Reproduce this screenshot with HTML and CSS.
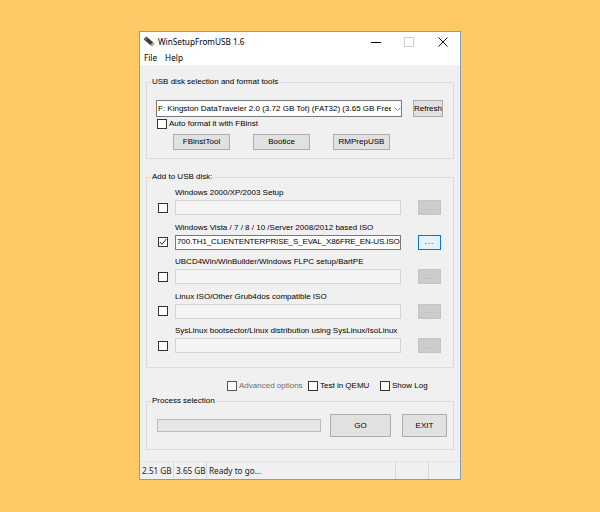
FILE: index.html
```html
<!DOCTYPE html>
<html>
<head>
<meta charset="utf-8">
<title>WinSetupFromUSB 1.6</title>
<link rel="stylesheet" href="styles.css">
</head>
<body>
<div class="window">
  <div class="titlebar">
    <svg class="appicon" viewBox="0 0 12 11" width="12" height="11">
      <path d="M0.6 3.2 L3.4 0.4 L10.2 6.2 L7.4 9.2 Z" fill="#3f3f3f"/>
      <path d="M7.4 9.2 L10.2 6.2 L11.8 7.8 L9 10.8 Z" fill="#a8a8a8"/>
      <path d="M1.4 3.2 L3.4 1.2 L4.8 2.4 L2.8 4.4 Z" fill="#6e6e6e"/>
    </svg>
    <span class="title">WinSetupFromUSB 1.6</span>
    <div class="winbtns">
      <span class="wb"><svg width="10" height="10" viewBox="0 0 10 10"><path d="M0 5.5 H10" stroke="#000" stroke-width="1"/></svg></span>
      <span class="wb"><svg width="10" height="10" viewBox="0 0 10 10"><rect x="0.5" y="0.5" width="9" height="9" fill="none" stroke="#cfcfcf" stroke-width="1"/></svg></span>
      <span class="wb wb-close"><svg width="10" height="10" viewBox="0 0 10 10"><path d="M0.5 0.5 L9.5 9.5 M9.5 0.5 L0.5 9.5" stroke="#111" stroke-width="1"/></svg></span>
    </div>
  </div>
  <div class="menubar"><span class="menu-item">File</span><span class="menu-item">Help</span></div>
  <div class="client">
    <fieldset class="group g1">
      <legend>USB disk selection and format tools</legend>
      <div class="group-body">
        <div class="combo-row">
          <div class="combo">
            <span class="combo-text">F: Kingston DataTraveler 2.0 (3.72 GB Tot) (FAT32) (3.65 GB Free)</span>
            <svg class="combo-arrow" width="7" height="4" viewBox="0 0 7 4"><path d="M0.5 0.5 L3.5 3.5 L6.5 0.5" fill="none" stroke="#8a8a8a" stroke-width="1"/></svg>
          </div>
          <div class="btn refresh">Refresh</div>
        </div>
        <div class="check-row"><span class="cb"></span><span class="cb-label">Auto format it with FBinst</span></div>
        <div class="tool-row">
          <div class="btn tool">FBinstTool</div>
          <div class="btn tool">Bootice</div>
          <div class="btn tool">RMPrepUSB</div>
        </div>
      </div>
    </fieldset>

    <fieldset class="group g2">
      <legend>Add to USB disk:</legend>
      <div class="group-body">
        <div class="item first">
          <div class="item-label">Windows 2000/XP/2003 Setup</div>
          <div class="item-row"><span class="cb"></span><div class="field off"></div><div class="dots off">...</div></div>
        </div>
        <div class="item">
          <div class="item-label">Windows Vista / 7 / 8 / 10 /Server 2008/2012 based ISO</div>
          <div class="item-row"><span class="cb checked"><svg width="8" height="8" viewBox="0 0 8 8"><path d="M0.8 4 L3 6.3 L7.3 1" fill="none" stroke="#222" stroke-width="1"/></svg></span><div class="field on"><span class="field-text">700.TH1_CLIENTENTERPRISE_S_EVAL_X86FRE_EN-US.ISO</span></div><div class="dots on">...</div></div>
        </div>
        <div class="item">
          <div class="item-label">UBCD4Win/WinBuilder/Windows FLPC setup/BartPE</div>
          <div class="item-row"><span class="cb"></span><div class="field off"></div><div class="dots off">...</div></div>
        </div>
        <div class="item">
          <div class="item-label">Linux ISO/Other Grub4dos compatible ISO</div>
          <div class="item-row"><span class="cb"></span><div class="field off"></div><div class="dots off">...</div></div>
        </div>
        <div class="item">
          <div class="item-label">SysLinux bootsector/Linux distribution using SysLinux/IsoLinux</div>
          <div class="item-row"><span class="cb"></span><div class="field off"></div><div class="dots off">...</div></div>
        </div>
      </div>
    </fieldset>

    <div class="options">
      <div class="opt opt-adv"><span class="cb dim"></span><span class="opt-label dim-text">Advanced options</span></div>
      <div class="opt opt-qemu"><span class="cb"></span><span class="opt-label">Test in QEMU</span></div>
      <div class="opt opt-log"><span class="cb"></span><span class="opt-label">Show Log</span></div>
    </div>

    <fieldset class="group g3">
      <legend>Process selection</legend>
      <div class="group-body">
        <div class="process-row">
          <div class="progress"></div>
          <div class="btn go">GO</div>
          <div class="btn exit">EXIT</div>
        </div>
      </div>
    </fieldset>
  </div>
  <div class="statusbar">
    <div class="panel p1">2.51 GB</div>
    <div class="panel p2">3.65 GB</div>
    <div class="panel p3">Ready to go...</div>
    <div class="panel p4"></div>
    <div class="panel p5"></div>
  </div>
</div>
</body>
</html>
```
FILE: styles.css
```css
* { box-sizing: border-box; }
html, body { margin: 0; padding: 0; }
body {
  background: #ffc966;
  width: 600px;
  height: 512px;
  overflow: hidden;
  font-family: "Liberation Sans", Arial, sans-serif;
  font-size: 8px;
  color: #000;
}
.window {
  margin: 31px 0 0 139px;
  width: 322px;
  height: 449px;
  border: 1px solid #7f9fc0;
  background: #f0f0f0;
  display: flex;
  flex-direction: column;
}
.titlebar {
  height: 19px;
  flex: none;
  background: #fff;
  display: flex;
  align-items: center;
}
.appicon { margin-left: 3px; flex: none; }
.title {
  margin-left: 3px;
  font-family: "Noto Sans", sans-serif;
  font-size: 8.2px;
  line-height: 10px;
}
.winbtns { margin-left: auto; display: flex; height: 100%; }
.wb { width: 33px; display: flex; align-items: center; justify-content: center; }
.wb-close { width: 35px; }
.menubar {
  height: 14px;
  flex: none;
  background: #fff;
  display: flex;
  align-items: center;
  padding-left: 4px;
  font-family: "Noto Sans", sans-serif;
  font-size: 8.2px;
}
.menu-item { margin-right: 8px; line-height: 10px; }
.client {
  flex: 1;
  padding: 12px 6px 0 6px;
}
.group {
  margin: 0;
  padding: 0;
  border: 1px solid #dcdcdc;
  min-width: 0;
}
.group legend {
  padding: 0 1px;
  margin-left: 4px;
  line-height: 10px;
  height: 10px;
  font-size: 8px;
}
.group-body { padding-left: 9px; }
/* group 1 */
.g1 .group-body { padding-bottom: 8px; }
.combo-row { display: flex; margin-top: 13px; height: 17px; }
.combo {
  width: 246px;
  height: 17px;
  background: #fff;
  border: 1px solid #7a7a7a;
  display: flex;
  align-items: center;
  padding-left: 1px;
  overflow: hidden;
}
.combo-text { white-space: nowrap; overflow: hidden; width: 233px; flex: none; line-height: 10px; }
.combo-arrow { margin-left: 3px; flex: none; }
.btn {
  background: #e1e1e1;
  border: 1px solid #adadad;
  display: flex;
  align-items: center;
  justify-content: center;
  line-height: 10px;
  white-space: nowrap;
}
.refresh { width: 30px; height: 17px; margin-left: 11px; }
.check-row { display: flex; align-items: center; height: 10px; margin-top: 2px; margin-left: 1px; }
.cb {
  width: 10px;
  height: 10px;
  flex: none;
  border: 1px solid #333;
  background: #fff;
  display: flex;
  align-items: center;
  justify-content: center;
}
.cb.dim { border-color: #555; }
.cb-label { margin-left: 2px; line-height: 10px; }
.tool-row { display: flex; gap: 23px; margin-top: 5px; padding-left: 17px; }
.tool { width: 57px; height: 16px; }
/* group 2 */
.g2 { margin-top: 13px; }
.g2 .group-body { padding-bottom: 14px; }
.item { margin-top: 7.5px; }
.item.first { margin-top: 6px; }
.item-label { margin-left: 19px; height: 10px; line-height: 10px; white-space: nowrap; }
.item-row { display: flex; align-items: center; margin-top: 2px; height: 15px; margin-left: 2px; }
.field {
  width: 226px;
  height: 15px;
  margin-left: 7px;
  display: flex;
  align-items: center;
  overflow: hidden;
}
.field.off { background: #f4f4f4; border: 1px solid #d5d5d5; }
.field.on { background: #fff; border: 1px solid #7a7a7a; padding-left: 1px; }
.field-text { white-space: nowrap; letter-spacing: -0.13px; line-height: 10px; }
.dots {
  width: 23px;
  height: 15px;
  margin-left: 17px;
  display: flex;
  align-items: center;
  justify-content: center;
  letter-spacing: 1px;
  line-height: 10px;
}
.dots.off { background: #cccccc; border: 1px solid #c4c4c4; color: #9d9d9d; }
.dots.on { background: #e5f1fb; border: 1px solid #0078d7; color: #000; }
/* options */
.options { display: flex; margin-top: 13px; height: 10px; padding-left: 81px; }
.opt { display: flex; align-items: center; height: 10px; }
.opt-adv { width: 81px; }
.opt-qemu { width: 72px; }
.opt-label { margin-left: 2px; line-height: 10px; white-space: nowrap; }
.dim-text { color: #6d6d6d; }
/* group 3 */
.g3 { margin-top: 5px; }
.g3 .group-body { padding-bottom: 12px; }
.process-row { display: flex; align-items: center; margin-top: 8px; height: 23px; padding-left: 1px; }
.progress { width: 164px; height: 13px; background: #e6e6e6; border: 1px solid #bcbcbc; }
.go { width: 61px; height: 23px; margin-left: 9px; }
.exit { width: 45px; height: 23px; margin-left: 11px; }
/* status bar */
.statusbar {
  height: 18px;
  flex: none;
  display: flex;
  border-top: 1px solid #e3e3e3;
  font-family: "Noto Sans", sans-serif;
  font-size: 8.2px;
  color: #222;
}
.panel {
  border-right: 1px solid #d9d9d9;
  display: flex;
  align-items: center;
  padding-left: 2px;
  line-height: 10px;
  white-space: nowrap;
}
.p1 { width: 34px; }
.p2 { width: 33px; }
.p3 { width: 189px; }
.p4 { width: 33px; }
.p5 { flex: 1; border-right: none; }
```
